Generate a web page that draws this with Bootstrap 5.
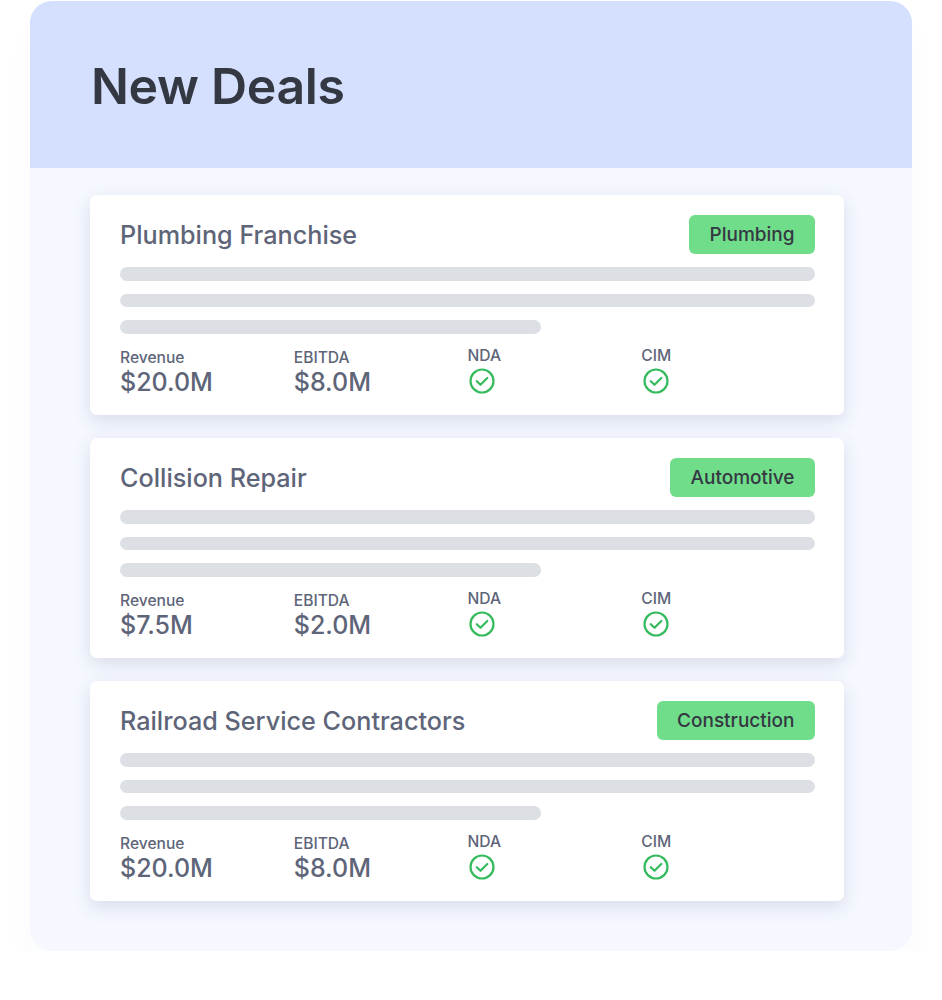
<!DOCTYPE html>
<html>

<head>
    <meta charset="utf-8">
    <title>New Deals</title>
    <link rel="stylesheet" href="https://cdn.jsdelivr.net/npm/bootstrap@5.3.0/dist/css/bootstrap.min.css">
    <script src="https://cdn.jsdelivr.net/npm/bootstrap@5.3.0/dist/js/bootstrap.bundle.min.js"></script>
    <style>
        body { background: #fff; font-family: Inter, "Liberation Sans", sans-serif; }
        .deals-panel { width: 882px; height: 950px; margin: 1px 0 0 30px; background: #f5f8ff; border-radius: 22px; box-shadow: 0 24px 36px rgba(60, 70, 100, .025); overflow: hidden; }
        .deals-head { height: 167px; background: #d5e0fe; padding: 3px 0 0 61px; }
        .deals-head h1 { font-size: 50px; font-weight: 600; color: #343842; letter-spacing: -.35px; margin: 0; }
        .deals-list { padding: 27px 68px 0 60px; gap: 23px; }
        .deal-box { height: 220px; border: 0; border-radius: 7px; padding: 20px 29px 0 30px; box-shadow: 0 6px 18px rgba(60, 70, 100, .15); }
        .deal-title { font-size: 25.2px; font-weight: 500; color: #5e6579; line-height: 40px; margin: 0 0 -1px; }
        .deal-tag { height: 39px; padding: 0 20.5px; background: #70dd8a; border-radius: 6px; color: #343842; font-size: 19px; font-weight: 500; line-height: 39px; }
        .skeleton { height: 13.5px; margin-top: 13px; background: #dcdfe4; border-radius: 7px; }
        .skeleton-short { width: 421px; }
        .deal-stats { margin-top: 15px; }
        .stat-label { font-size: 15.6px; font-weight: 500; color: #5e6579; line-height: 18px; }
        .stat-value { font-size: 25px; font-weight: 500; color: #5e6579; line-height: 30px; }
        .stat-check { display: block; width: 26px; height: 26px; margin: 3px 0 0 1.4px; }
        .stat-raise { margin-top: -2px; }
    </style>
</head>

<body>
    <div class="deals-panel">
        <div class="deals-head d-flex align-items-center">
            <h1>New Deals</h1>
        </div>
        <div class="deals-list d-flex flex-column">

            <div class="card deal-box">
                <div class="d-flex justify-content-between">
                    <h2 class="deal-title">Plumbing Franchise</h2>
                    <span class="deal-tag">Plumbing</span>
                </div>
                <div class="skeleton"></div>
                <div class="skeleton"></div>
                <div class="skeleton skeleton-short"></div>
                <div class="row g-0 deal-stats">
                    <div class="col-3"><div class="stat-label">Revenue</div><div class="stat-value">$20.0M</div></div>
                    <div class="col-3"><div class="stat-label">EBITDA</div><div class="stat-value">$8.0M</div></div>
                    <div class="col-3 stat-raise"><div class="stat-label">NDA</div>
                        <svg class="stat-check" viewBox="0 0 26 26" fill="none" stroke="#35bb5d" stroke-width="2.2" stroke-linecap="round" stroke-linejoin="round"><circle cx="13" cy="13" r="11.5"/><path d="M7.8 13.2l3.7 3.6 6.8-6.8"/></svg>
                    </div>
                    <div class="col-3 stat-raise"><div class="stat-label">CIM</div>
                        <svg class="stat-check" viewBox="0 0 26 26" fill="none" stroke="#35bb5d" stroke-width="2.2" stroke-linecap="round" stroke-linejoin="round"><circle cx="13" cy="13" r="11.5"/><path d="M7.8 13.2l3.7 3.6 6.8-6.8"/></svg>
                    </div>
                </div>
            </div>

            <div class="card deal-box">
                <div class="d-flex justify-content-between">
                    <h2 class="deal-title">Collision Repair</h2>
                    <span class="deal-tag">Automotive</span>
                </div>
                <div class="skeleton"></div>
                <div class="skeleton"></div>
                <div class="skeleton skeleton-short"></div>
                <div class="row g-0 deal-stats">
                    <div class="col-3"><div class="stat-label">Revenue</div><div class="stat-value">$7.5M</div></div>
                    <div class="col-3"><div class="stat-label">EBITDA</div><div class="stat-value">$2.0M</div></div>
                    <div class="col-3 stat-raise"><div class="stat-label">NDA</div>
                        <svg class="stat-check" viewBox="0 0 26 26" fill="none" stroke="#35bb5d" stroke-width="2.2" stroke-linecap="round" stroke-linejoin="round"><circle cx="13" cy="13" r="11.5"/><path d="M7.8 13.2l3.7 3.6 6.8-6.8"/></svg>
                    </div>
                    <div class="col-3 stat-raise"><div class="stat-label">CIM</div>
                        <svg class="stat-check" viewBox="0 0 26 26" fill="none" stroke="#35bb5d" stroke-width="2.2" stroke-linecap="round" stroke-linejoin="round"><circle cx="13" cy="13" r="11.5"/><path d="M7.8 13.2l3.7 3.6 6.8-6.8"/></svg>
                    </div>
                </div>
            </div>

            <div class="card deal-box">
                <div class="d-flex justify-content-between">
                    <h2 class="deal-title">Railroad Service Contractors</h2>
                    <span class="deal-tag">Construction</span>
                </div>
                <div class="skeleton"></div>
                <div class="skeleton"></div>
                <div class="skeleton skeleton-short"></div>
                <div class="row g-0 deal-stats">
                    <div class="col-3"><div class="stat-label">Revenue</div><div class="stat-value">$20.0M</div></div>
                    <div class="col-3"><div class="stat-label">EBITDA</div><div class="stat-value">$8.0M</div></div>
                    <div class="col-3 stat-raise"><div class="stat-label">NDA</div>
                        <svg class="stat-check" viewBox="0 0 26 26" fill="none" stroke="#35bb5d" stroke-width="2.2" stroke-linecap="round" stroke-linejoin="round"><circle cx="13" cy="13" r="11.5"/><path d="M7.8 13.2l3.7 3.6 6.8-6.8"/></svg>
                    </div>
                    <div class="col-3 stat-raise"><div class="stat-label">CIM</div>
                        <svg class="stat-check" viewBox="0 0 26 26" fill="none" stroke="#35bb5d" stroke-width="2.2" stroke-linecap="round" stroke-linejoin="round"><circle cx="13" cy="13" r="11.5"/><path d="M7.8 13.2l3.7 3.6 6.8-6.8"/></svg>
                    </div>
                </div>
            </div>

        </div>
    </div>
</body>

</html>
